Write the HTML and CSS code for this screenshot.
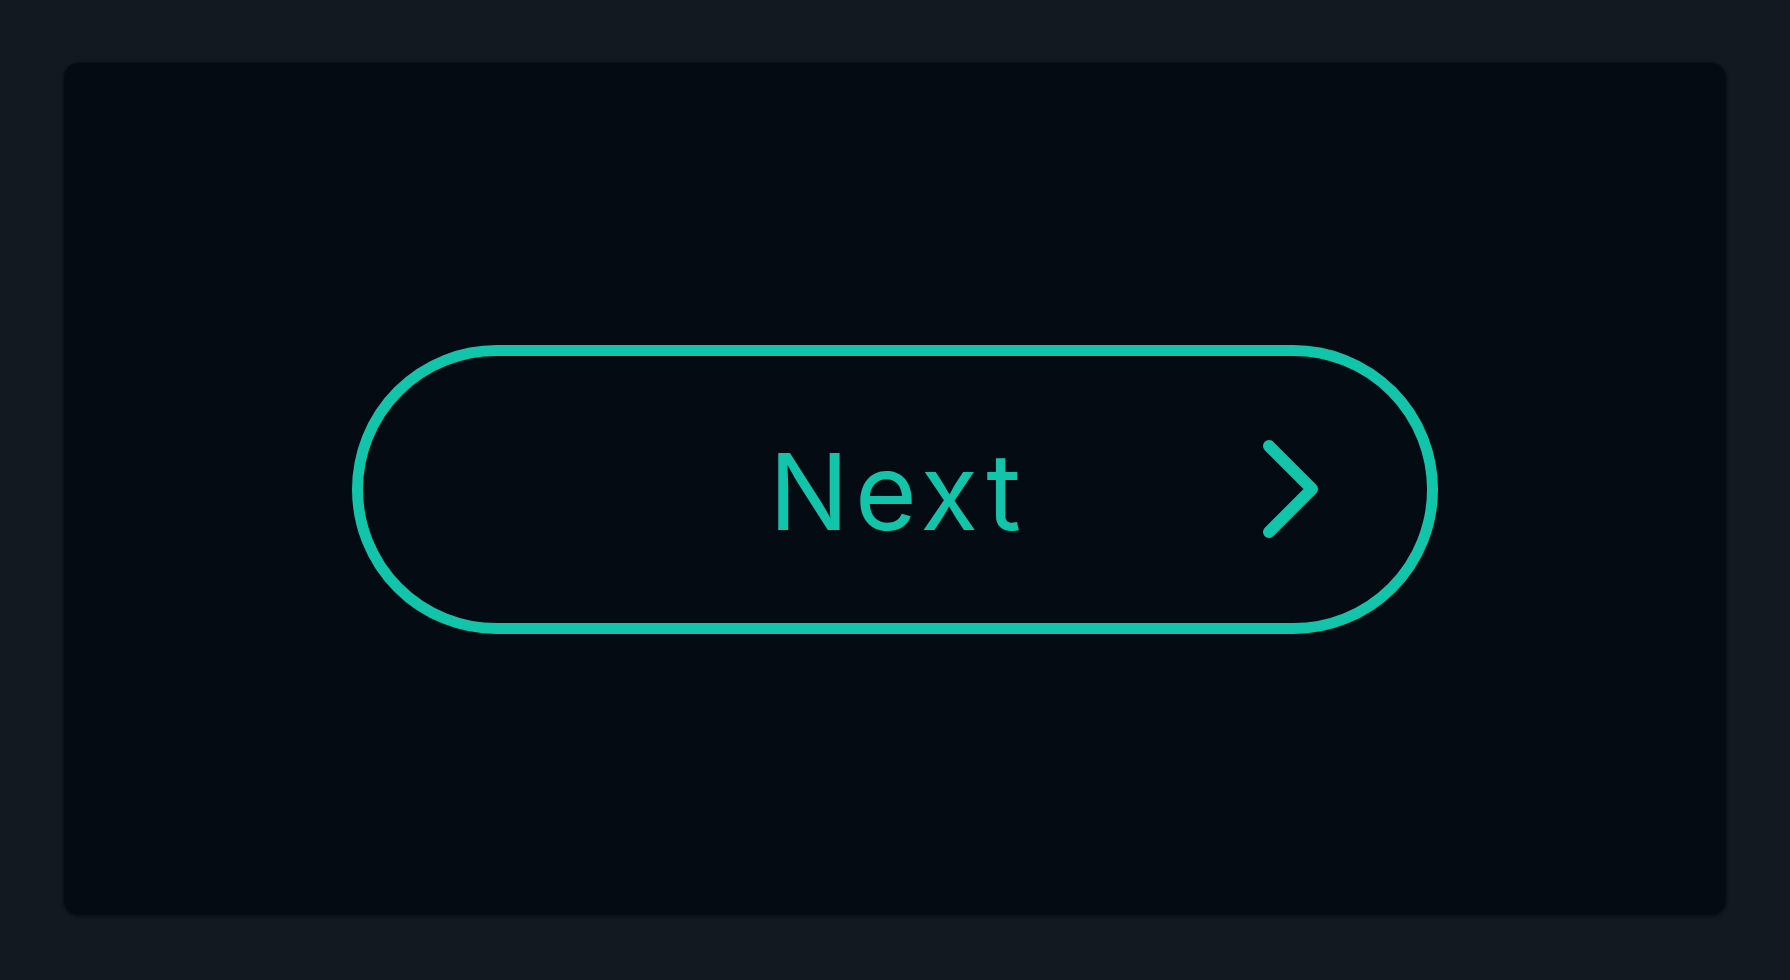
FILE: index.html
```html
<!DOCTYPE html>
<html lang="en">
<head>
<meta charset="utf-8">
<title>Next</title>
<link rel="stylesheet" href="styles.css">
</head>
<body>
<main class="card">
  <button class="next-btn" type="button">
    <span class="spacer"></span>
    <span class="label">Next</span>
    <span class="icon-cell">
      <svg class="chevron" width="66" height="106" viewBox="0 0 66 106" aria-hidden="true">
        <path d="M10 10 L53 53 L10 96" fill="none" stroke="currentColor" stroke-width="12" stroke-linecap="round" stroke-linejoin="round"/>
      </svg>
    </span>
  </button>
</main>
</body>
</html>
```

FILE: styles.css
```css
html, body {
  margin: 0;
  height: 100%;
}

body {
  box-sizing: border-box;
  display: flex;
  padding: 62px 63px 64px;
  background: #131920;
  font-family: Inter, "Liberation Sans", sans-serif;
}

.card {
  flex: 1;
  display: flex;
  align-items: center;
  justify-content: center;
  background: #050b12;
  border: 1px solid #0c1219;
  border-radius: 16px;
  box-shadow: 0 1px 3px rgba(0, 0, 0, 0.35);
}

.next-btn {
  box-sizing: border-box;
  width: 1086px;
  height: 289px;
  display: grid;
  grid-template-columns: 1fr auto 1fr;
  align-items: center;
  padding: 0 102px;
  margin: 0;
  background: transparent;
  border: 11px solid #12c4aa;
  border-radius: 145px;
  color: #12c4aa;
  font-family: inherit;
  cursor: pointer;
}

.label {
  margin-left: 6px;
  padding-top: 5px;
  font-size: 106px;
  font-weight: 400;
  line-height: 1;
  letter-spacing: 6px;
}

.icon-cell {
  display: flex;
  justify-content: flex-end;
  align-items: center;
}

.chevron {
  display: block;
}
```
